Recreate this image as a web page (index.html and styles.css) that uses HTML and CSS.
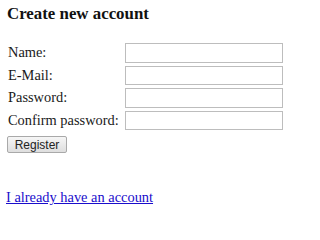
FILE: index.html
```html
<!DOCTYPE html>
<html>
<head>
<meta charset="utf-8">
<link rel="stylesheet" href="styles.css">
</head>
<body>
<h3 class="title">Create new account</h3>
<form class="form">
  <label class="lbl" for="n">Name:</label>
  <input class="field" id="n" type="text">
  <label class="lbl" for="e">E-Mail:</label>
  <input class="field" id="e" type="text">
  <label class="lbl" for="p">Password:</label>
  <input class="field" id="p" type="password">
  <label class="lbl" for="c">Confirm password:</label>
  <input class="field" id="c" type="password">
  <div class="actions"><button class="btn" type="button">Register</button></div>
</form>
<a class="link" href="#">I already have an account</a>
</body>
</html>
```
FILE: styles.css
```css
html, body {
  margin: 0;
  padding: 0;
  background: #ffffff;
}
body {
  padding: 0 7px;
  font-family: "Liberation Serif", "Times New Roman", serif;
  font-size: 14.4px;
  color: #1a1a1a;
}
.title {
  margin: 0;
  padding-top: 5px;
  font-size: 16.85px;
  font-weight: bold;
  line-height: 18px;
  color: #111;
}
.form {
  margin-top: 20px;
  display: grid;
  grid-template-columns: 115px 158px;
  column-gap: 2px;
  row-gap: 3px;
  align-items: center;
  padding-left: 1px;
}
.lbl {
  line-height: 19.5px;
}
.field {
  box-sizing: border-box;
  width: 158px;
  height: 19.5px;
  margin: 0;
  border: 1px solid #bdbdbd;
  background: #fff;
  padding: 0 2px;
}
.actions {
  grid-column: 1 / span 2;
  margin-top: 2.5px;
}
.btn {
  box-sizing: border-box;
  height: 17px;
  width: 60px;
  margin: 0 0 0 -1px;
  padding: 0;
  font-family: "Liberation Sans", Arial, sans-serif;
  font-size: 12px;
  color: #222;
  border: 1px solid #a9a9a9;
  border-radius: 2px;
  background: linear-gradient(#f6f6f6, #dedede);
}
.link {
  display: inline-block;
  margin-top: 36px;
  margin-left: -1px;
  color: #1a0dcc;
  text-decoration: underline;
}
```
